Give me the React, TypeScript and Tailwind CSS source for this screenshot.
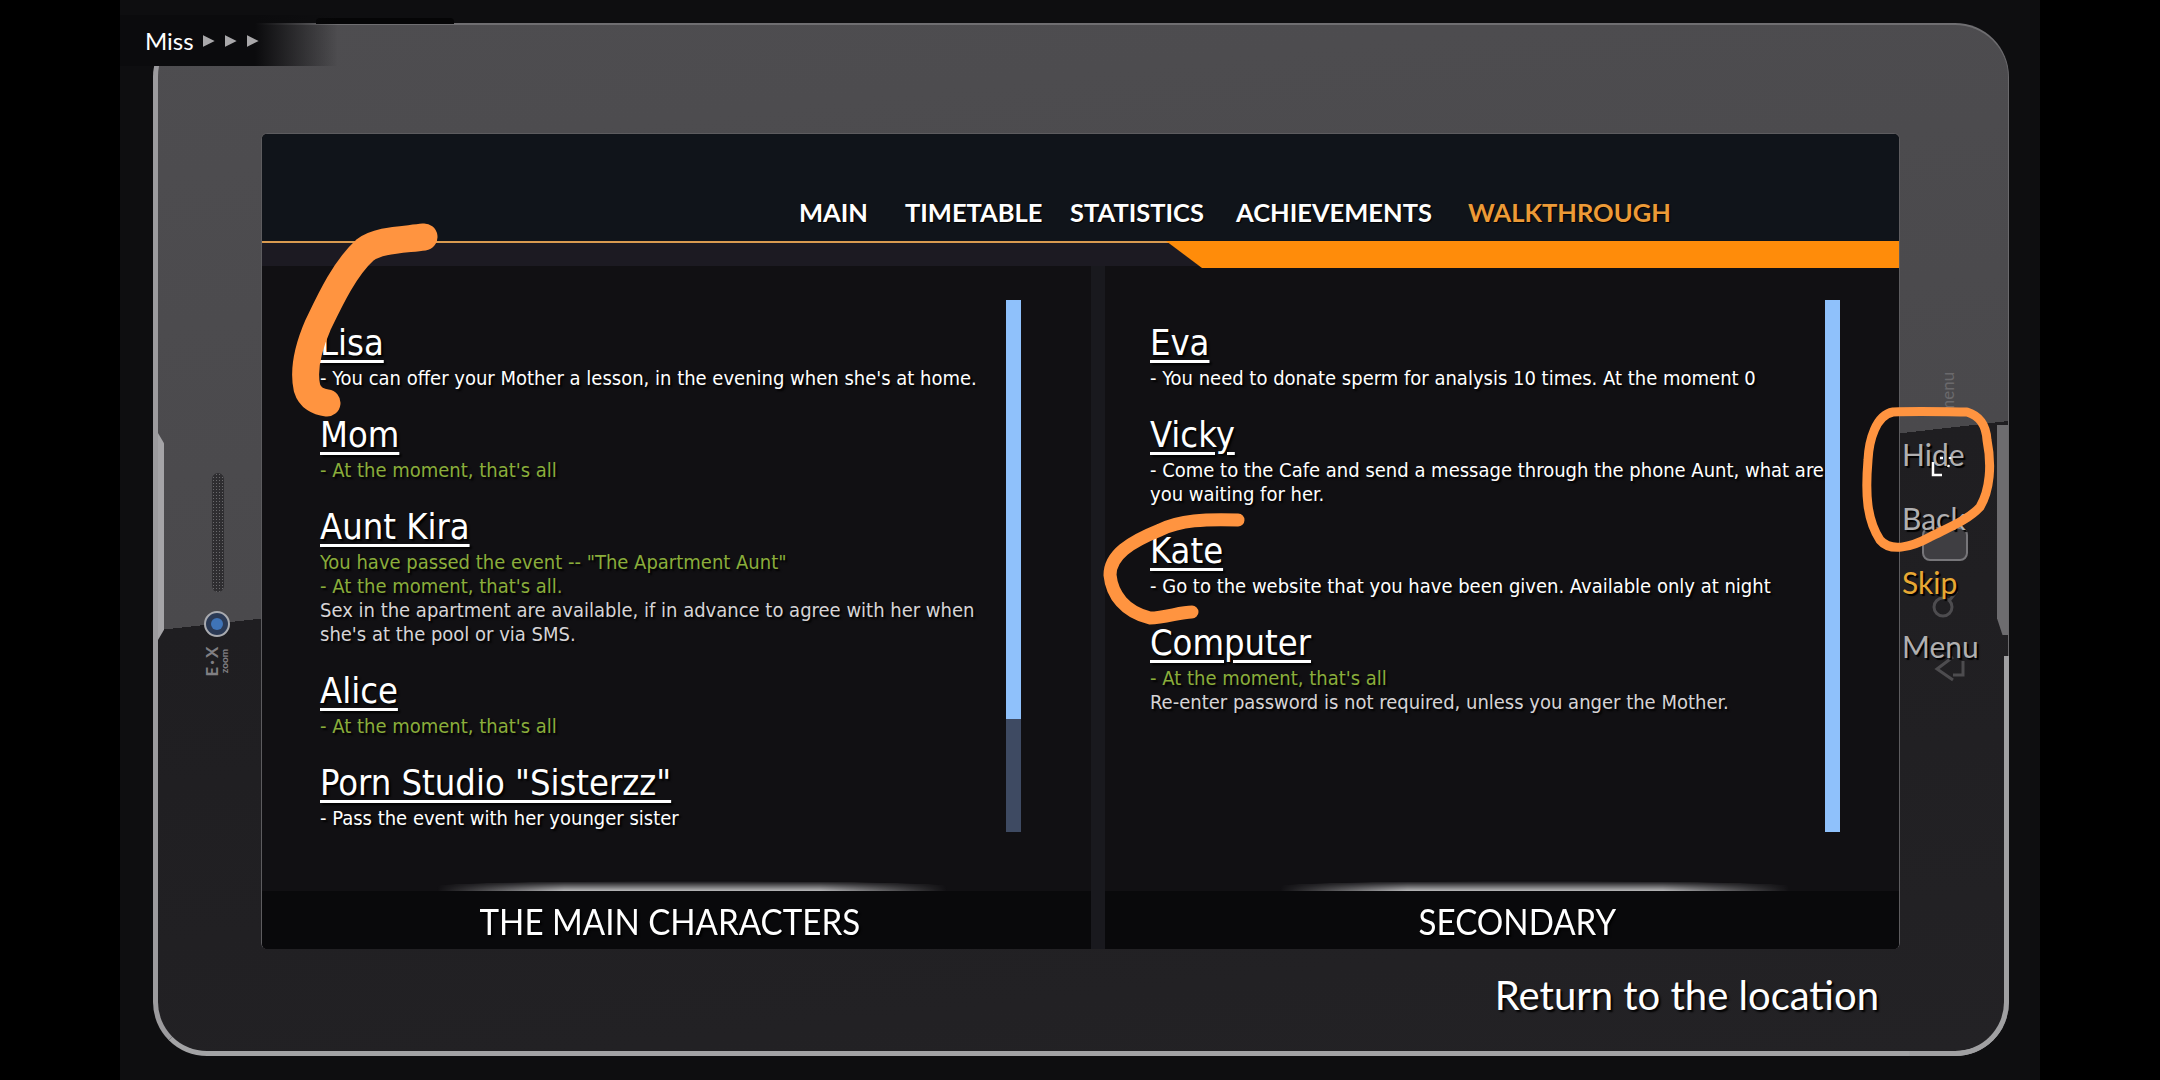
const leftRows = [
  { name: 'Lisa', lines: [{ t: "- You can offer your Mother a lesson, in the evening when she's at home.", c: 'w' }] },
  { name: 'Mom', lines: [{ t: "- At the moment, that's all", c: 'g' }] },
  {
    name: 'Aunt Kira',
    lines: [
      { t: 'You have passed the event -- "The Apartment Aunt"', c: 'g' },
      { t: "- At the moment, that's all.", c: 'g' },
      { t: "Sex in the apartment are available, if in advance to agree with her when she's at the pool or via SMS.", c: 'd' },
    ],
  },
  { name: 'Alice', lines: [{ t: "- At the moment, that's all", c: 'g' }] },
  { name: 'Porn Studio "Sisterzz"', lines: [{ t: '- Pass the event with her younger sister', c: 'w' }] },
]

const rightRows = [
  { name: 'Eva', lines: [{ t: '- You need to donate sperm for analysis 10 times. At the moment 0', c: 'w' }] },
  { name: 'Vicky', lines: [{ t: '- Come to the Cafe and send a message through the phone Aunt, what are you waiting for her.', c: 'w' }] },
  { name: 'Kate', lines: [{ t: '- Go to the website that you have been given. Available only at night', c: 'w' }] },
  {
    name: 'Computer',
    lines: [
      { t: "- At the moment, that's all", c: 'g' },
      { t: 'Re-enter password is not required, unless you anger the Mother.', c: 'd' },
    ],
  },
]

const lineColor: Record<string, string> = { w: 'text-white', g: 'text-[#8aad3b]', d: 'text-[#d6d4d6]' }

function Row({ name, lines }: { name: string; lines: { t: string; c: string }[] }) {
  return (
    <div className="mb-6">
      <h3 className="h-11 text-[36px] leading-[42px] text-white underline decoration-[3px] underline-offset-[5px] [text-shadow:2px_2px_2px_#000]">
        {name}
      </h3>
      {lines.map((l) => (
        <p key={l.t} className={`text-[20px] leading-6 [text-shadow:2px_2px_2px_#000] ${lineColor[l.c]}`}>
          {l.t}
        </p>
      ))}
    </div>
  )
}

function Panel({
  rows,
  title,
  className,
  gutter,
  thumb,
  titleClass,
}: {
  rows: typeof leftRows
  title: string
  className: string
  gutter: string
  thumb: string
  titleClass: string
}) {
  return (
    <section className={`flex flex-col bg-[#111013] ${className}`}>
      <div className="flex h-[625px] pt-[34px] font-['DejaVu_Sans',sans-serif] [font-stretch:condensed]">
        <div className={`pt-[22px] ${gutter}`}>
          {rows.map((r) => (
            <Row key={r.name} {...r} />
          ))}
        </div>
        <div className="flex h-[532px] w-[15px] flex-col bg-[#3e4a62]">
          <div className={`bg-[#8fc1fb] ${thumb}`} />
        </div>
      </div>
      <div className={`relative flex flex-1 items-center justify-center bg-[#09090b] pt-[2px] text-[36px] text-white [text-shadow:2px_2px_2px_#000] ${titleClass}`}>
        <div className="absolute -top-[10px] left-[175px] h-[10px] w-[510px] rounded-t-[100%] bg-[linear-gradient(90deg,transparent,#b9b9bb_25%,#b9b9bb_75%,transparent)] [mask-image:linear-gradient(0deg,#000,transparent)]" />
        <span className="scale-x-[0.92]">{title}</span>
      </div>
    </section>
  )
}

function Scribbles() {
  return (
    <svg className="pointer-events-none absolute left-0 top-0" width="2160" height="1080" fill="none" stroke="#ff9440" strokeLinecap="round" strokeLinejoin="round">
      <path strokeWidth="27" d="M424 237C400 240 378 240 365 250C345 268 330 300 318 325C308 348 303 370 307 388C310 398 318 402 327 403" />
      <path strokeWidth="13" d="M1238 520C1205 519 1180 520 1160 530C1130 542 1110 555 1110 575C1112 595 1125 612 1150 618C1165 618 1180 612 1192 612" />
      <path strokeWidth="9" d="M1893 412C1920 411 1950 412 1967 412C1980 416 1986 425 1987 440C1992 465 1990 490 1980 507C1968 520 1950 527 1930 537C1910 548 1890 552 1880 540C1867 520 1865 495 1868 460C1869 440 1876 415 1893 412Z" />
    </svg>
  )
}

export default function App() {
  return (
    <div className="relative flex h-[1080px] w-[2160px] justify-center overflow-hidden bg-black font-['Lato',sans-serif]">
      <div className="relative h-full w-[1920px] bg-[#0e0e10] pl-[33px] pt-[23px]">
        {/* tablet body */}
        <div className="relative h-[1033px] w-[1856px] rounded-[54px] border-b-[5px] border-l-[5px] border-r border-t-2 border-b-[#a3a3a5] border-l-[#9c9b9e] border-r-[#6a696c] border-t-[#6f6e71] bg-[linear-gradient(173.55deg,#4e4d50_0%,#4a494c_49%,#1f1e21_49%,#232225_100%)] pl-[103px] pt-[108px]">
          {/* side buttons */}
          <div className="absolute left-0 top-[408px] h-[207px] w-[6px] bg-[#a5a4a7] [clip-path:polygon(0_0,100%_5%,100%_95%,0_100%)]" />
          <div className="absolute right-0 top-[400px] h-[210px] w-[11px] bg-[#6d6c6f] [clip-path:polygon(0_0,100%_0,100%_100%,50%_100%,0_92%)]" />
          <div className="absolute -bottom-[5px] -right-px h-[400px] w-[100px] rounded-br-[54px] border-b-[5px] border-r-[5px] border-[#a0a0a2]" />

          {/* speaker and camera */}
          <div className="absolute left-[54px] top-[448px] h-[119px] w-[12px] rounded-full bg-[#2f2e31] bg-[radial-gradient(#6a696c_1px,transparent_1px)] bg-[length:3px_3px]" />
          <div className="absolute left-[46px] top-[586px] flex h-[26px] w-[26px] items-center justify-center rounded-full border-2 border-[#a9abb0] bg-[#2b3a55]">
            <div className="h-3 w-3 rounded-full bg-[#3f74b8]" />
          </div>
          <div className="absolute left-[23px] top-[627px] w-[60px] -rotate-90 text-center text-[17px] font-bold leading-none tracking-[2px] text-[#807f83]">E·X</div>
          <div className="absolute left-[36px] top-[631px] w-[60px] -rotate-90 text-center text-[10px] font-bold leading-none text-[#807f83]">zoom</div>

          {/* screen */}
          <div className="flex h-[816px] w-[1639px] flex-col overflow-hidden rounded-md border border-b-0 border-[#5d5c5f] bg-[#111013]">
            <nav className="flex h-[107px] items-end bg-[#10141a] pb-[10px] pl-[537px] text-[25.5px] font-bold text-white [text-shadow:1px_1px_1px_#000]">
              <span className="w-[106px]">MAIN</span>
              <span className="w-[165px]">TIMETABLE</span>
              <span className="w-[166px]">STATISTICS</span>
              <span className="w-[232px]">ACHIEVEMENTS</span>
              <span className="text-[#ec9a37]">WALKTHROUGH</span>
            </nav>
            <div className="flex h-[25px] justify-end border-t-2 border-[#d99a50] bg-[#1c1a22]">
              <div className="-mt-[2px] h-[27px] w-[733px] bg-[#ff8c0a] [clip-path:polygon(0_0,100%_0,100%_100%,36px_100%)]" />
            </div>
            <div className="flex flex-1 bg-[#19191e]">
              <Panel rows={leftRows} title="THE MAIN CHARACTERS" className="w-[829px]" gutter="w-[744px] pl-[58px] pr-[8px]" thumb="h-[419px]" titleClass="pr-[14px]" />
              <Panel rows={rightRows} title="SECONDARY" className="ml-[14px] flex-1" gutter="w-[720px] pl-[45px]" thumb="h-[532px]" titleClass="pl-[30px]" />
            </div>
          </div>

          {/* return link */}
          <div className="flex h-[96px] w-[1618px] items-center justify-end pb-[4px] text-[40px] text-white [text-shadow:2px_2px_2px_#000]">
            Return to the location
          </div>

          {/* android keys behind the quick menu */}
          <div className="absolute left-[1764px] top-[502px] h-[34px] w-[46px] rounded-lg border-2 border-[#77767a] bg-[#3f3e42]" />
          <svg className="absolute left-[1765px] top-[562px]" width="50" height="100" fill="none" stroke="#4d4c4f" strokeWidth="3">
            <circle cx="20" cy="20" r="9" />
            <path d="M26 14 34 4" />
            <path d="M30 70 14 82 30 93M40 74V88H30" />
          </svg>
          <div className="absolute left-[1760px] top-[355px] w-[60px] -rotate-90 text-center text-[17px] text-[#6a696c]">menu</div>
        </div>

        {/* power key on top */}
        <div className="absolute left-[196px] top-[18px] h-[6px] w-[138px] rounded-t-sm bg-[#050506]" />

        {/* say window label */}
        <div className="absolute left-0 top-[15px] flex h-[51px] w-[218px] items-center gap-[9px] bg-[linear-gradient(90deg,#0b0b0d_0%,#0b0b0d_62%,transparent_100%)] pl-[25px] text-[24px] text-white">
          Miss
          <span className="flex gap-[10px] pt-[1px]">
            {[0, 1, 2].map((i) => (
              <span key={i} className="h-3 w-3 bg-[#a9a8aa] [clip-path:polygon(0_0,100%_50%,0_100%)]" />
            ))}
          </span>
        </div>
      </div>

      {/* quick menu */}
      <div className="absolute left-[1902px] top-[422px] flex flex-col text-[30px] leading-[64px] text-[#b0afb0] [text-shadow:2px_2px_1px_#000]">
        <span>Hide</span>
        <span>Back</span>
        <span className="text-[#e7a833]">Skip</span>
        <span>Menu</span>
      </div>
      <Scribbles />
      <svg className="absolute left-[1930px] top-[455px]" width="26" height="24" fill="none" stroke="#fff" strokeWidth="2.5">
        <path d="M3 7v13h9" />
        <path d="M10 3h3M20 2v2M18 12l1-2" />
      </svg>
    </div>
  )
}
